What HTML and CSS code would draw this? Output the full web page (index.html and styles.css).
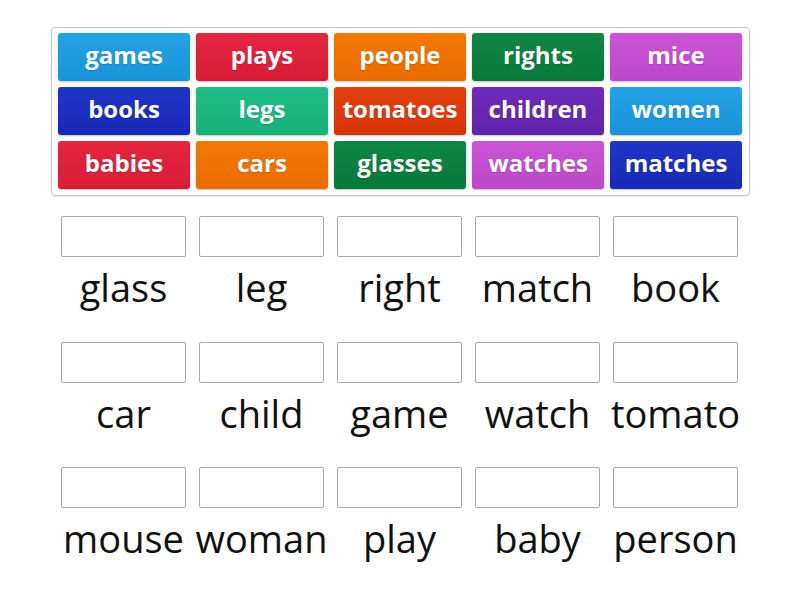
FILE: index.html
```html
<!DOCTYPE html>
<html>
<head>
<meta charset="utf-8">
<link rel="stylesheet" href="styles.css">
</head>
<body>
<div class="page">
  <div class="bank">
    <div class="tile c-sky">games</div>
    <div class="tile c-red">plays</div>
    <div class="tile c-orange">people</div>
    <div class="tile c-green">rights</div>
    <div class="tile c-magenta">mice</div>
    <div class="tile c-navy">books</div>
    <div class="tile c-teal">legs</div>
    <div class="tile c-rust">tomatoes</div>
    <div class="tile c-purple">children</div>
    <div class="tile c-sky">women</div>
    <div class="tile c-red">babies</div>
    <div class="tile c-orange">cars</div>
    <div class="tile c-green">glasses</div>
    <div class="tile c-magenta">watches</div>
    <div class="tile c-navy">matches</div>
  </div>
  <div class="answers">
    <div class="cell"><div class="slot"></div><div class="label">glass</div></div>
    <div class="cell"><div class="slot"></div><div class="label">leg</div></div>
    <div class="cell"><div class="slot"></div><div class="label">right</div></div>
    <div class="cell"><div class="slot"></div><div class="label">match</div></div>
    <div class="cell"><div class="slot"></div><div class="label">book</div></div>
    <div class="cell"><div class="slot"></div><div class="label">car</div></div>
    <div class="cell"><div class="slot"></div><div class="label">child</div></div>
    <div class="cell"><div class="slot"></div><div class="label">game</div></div>
    <div class="cell"><div class="slot"></div><div class="label">watch</div></div>
    <div class="cell"><div class="slot"></div><div class="label">tomato</div></div>
    <div class="cell"><div class="slot"></div><div class="label">mouse</div></div>
    <div class="cell"><div class="slot"></div><div class="label">woman</div></div>
    <div class="cell"><div class="slot"></div><div class="label">play</div></div>
    <div class="cell"><div class="slot"></div><div class="label">baby</div></div>
    <div class="cell"><div class="slot"></div><div class="label">person</div></div>
  </div>
</div>
</body>
</html>
```
FILE: styles.css
```css
html, body {
  margin: 0;
  padding: 0;
  background: #ffffff;
  font-family: "Open Sans", "Liberation Sans", sans-serif;
}

.page {
  width: 800px;
  height: 600px;
  padding-top: 27px;
  box-sizing: border-box;
}

.bank {
  margin-left: 51px;
  width: 699px;
  box-sizing: border-box;
  border: 1px solid #c8c8c8;
  border-radius: 4px;
  padding: 5px 6px 6px 6px;
  display: grid;
  grid-template-columns: repeat(5, 132px);
  grid-auto-rows: 48px;
  column-gap: 6px;
  row-gap: 6px;
  box-shadow: 0 1px 2px rgba(0,0,0,0.08);
}

.tile {
  border-radius: 3px;
  color: #ffffff;
  font-weight: 700;
  font-size: 24px;
  display: flex;
  align-items: center;
  justify-content: center;
  line-height: 1;
  padding-bottom: 4px;
  box-sizing: border-box;
  box-shadow: 0 1px 2px rgba(0,0,0,0.25);
  text-shadow: 0 1px 1px rgba(0,0,0,0.15);
}

.c-sky { background: linear-gradient(#24a2e6, #1893d8); }
.c-red { background: linear-gradient(#e4263f, #d81d35); }
.c-orange { background: linear-gradient(#f37805, #ea6b00); }
.c-green { background: linear-gradient(#0e8744, #08783b); }
.c-magenta { background: linear-gradient(#c955d4, #bd47c9); }
.c-navy { background: linear-gradient(#1f35c6, #1828b6); }
.c-teal { background: linear-gradient(#1fbd86, #17b07a); }
.c-rust { background: linear-gradient(#e3400f, #d8340a); }
.c-purple { background: linear-gradient(#6e2cba, #6122aa); }

.answers {
  margin-left: 61px;
  margin-top: 20px;
  display: grid;
  grid-template-columns: repeat(5, 125px);
  column-gap: 13px;
  row-gap: 29.5px;
}

.cell {
  display: flex;
  flex-direction: column;
  align-items: center;
}

.slot {
  width: 125px;
  height: 41px;
  box-sizing: border-box;
  border: 1px solid #a9a9a9;
  border-radius: 2px;
  background: #ffffff;
}

.label {
  margin-top: 5px;
  height: 50px;
  line-height: 50px;
  font-size: 38px;
  color: #111111;
  white-space: nowrap;
  text-align: center;
}
```
